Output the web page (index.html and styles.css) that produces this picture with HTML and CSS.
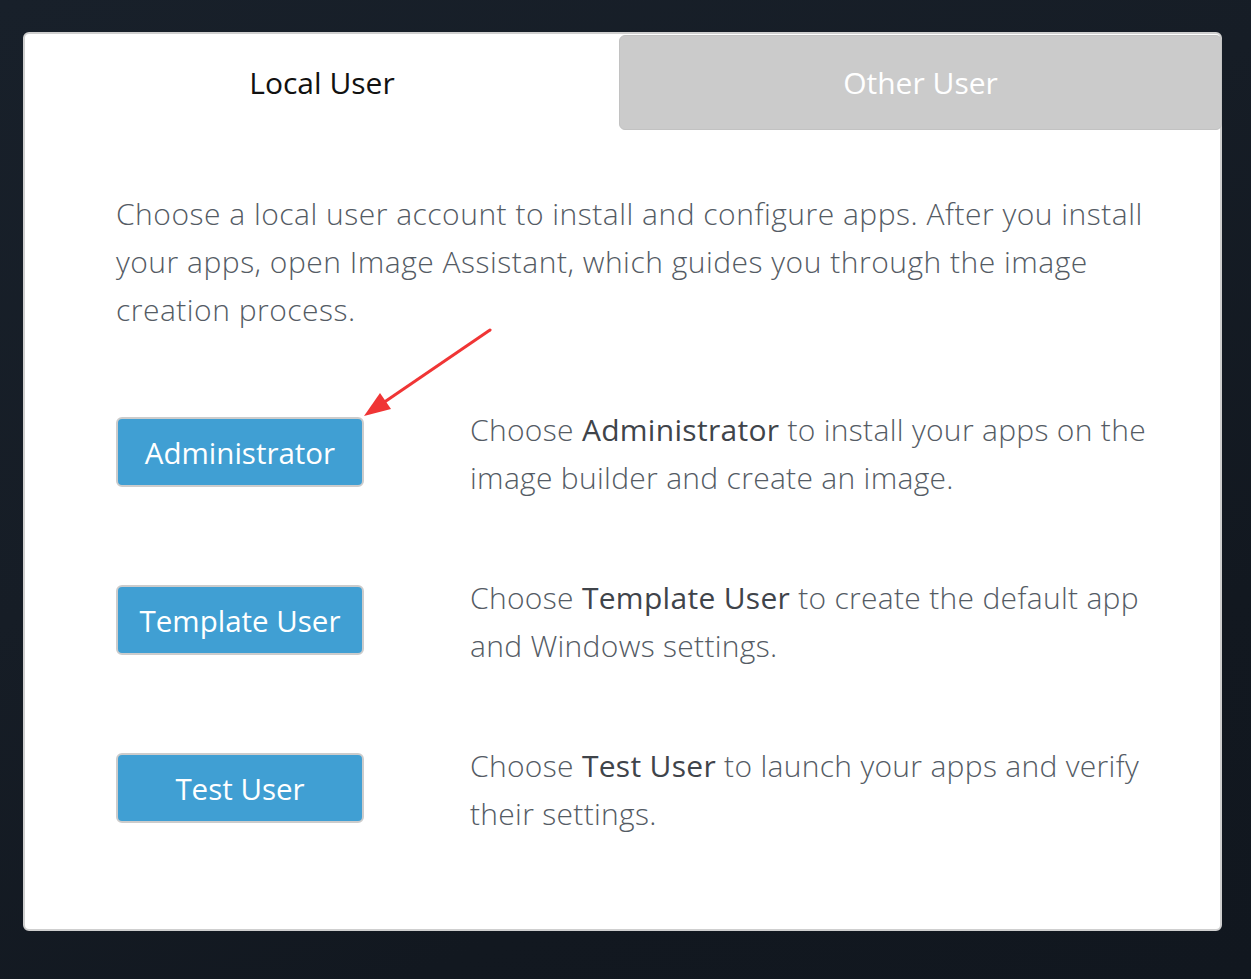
FILE: index.html
```html
<!DOCTYPE html>
<html lang="en">
<head>
<meta charset="utf-8">
<title>Local User</title>
<link rel="stylesheet" href="styles.css">
</head>
<body>
<div class="card">
  <div class="tabs">
    <div class="tab tab-active">Local User</div>
    <div class="tab tab-inactive">Other User</div>
  </div>
  <p class="intro">Choose a local user account to install and configure apps. After you install your apps, open Image Assistant, which guides you through the image creation process.</p>
  <div class="rows">
    <div class="row">
      <button class="user-btn">Administrator</button>
      <p class="desc"><span class="line">Choose <b>Administrator</b> to install your apps on the</span><span class="line">image builder and create an image.</span></p>
    </div>
    <div class="row">
      <button class="user-btn">Template User</button>
      <p class="desc"><span class="line">Choose <b>Template User</b> to create the default app</span><span class="line">and Windows settings.</span></p>
    </div>
    <div class="row">
      <button class="user-btn">Test User</button>
      <p class="desc"><span class="line">Choose <b>Test User</b> to launch your apps and verify</span><span class="line">their settings.</span></p>
    </div>
  </div>
  <svg class="arrow" width="140" height="97" viewBox="0 0 140 97">
    <line x1="135" y1="5" x2="28" y2="78" stroke="#f03535" stroke-width="3" stroke-linecap="round"/>
    <polygon points="9,91 36,84 25,68" fill="#f03535"/>
  </svg>
</div>
</body>
</html>
```
FILE: styles.css
```css
html, body {
  margin: 0;
  padding: 0;
}
body {
  width: 1251px;
  height: 979px;
  overflow: hidden;
  background: linear-gradient(155deg, #18202a 0%, #161d26 40%, #121820 75%, #11171f 100%);
  font-family: "Open Sans", "Liberation Sans", sans-serif;
}
.card {
  position: relative;
  box-sizing: border-box;
  margin: 32px 0 0 23px;
  width: 1199px;
  height: 899px;
  background: #ffffff;
  border: 2px solid #cfcfcf;
  border-radius: 6px;
}
.tabs {
  display: flex;
  height: 96px;
}
.tab {
  display: flex;
  align-items: center;
  justify-content: center;
  font-size: 30px;
  box-sizing: border-box;
}
.tab-active {
  width: 594px;
  color: #111111;
  font-weight: 400;
}
.tab-inactive {
  flex: 1;
  margin-top: 1px;
  margin-right: -2px;
  background: #cbcbcb;
  color: #ffffff;
  border: 1px solid #c2c2c2;
  border-radius: 6px;
}
.intro {
  margin: 60px 60px 0 91px;
  font-size: 30px;
  line-height: 48px;
  font-weight: 300;
  letter-spacing: 0.5px;
  color: #545b64;
}
.rows {
  display: flex;
  flex-direction: column;
  gap: 72px;
  margin: 72px 0 0 91px;
}
.row {
  display: flex;
  align-items: flex-start;
  gap: 106px;
}
.user-btn {
  flex: none;
  margin-top: 11px;
  width: 248px;
  height: 70px;
  box-sizing: border-box;
  background: #409fd3;
  border: 2px solid #cccccc;
  border-radius: 6px;
  color: #ffffff;
  font-family: inherit;
  font-size: 29.5px;
  font-weight: 400;
  padding: 0;
}
.desc {
  margin: 0;
  font-size: 30px;
  line-height: 48px;
  font-weight: 300;
  letter-spacing: 0.3px;
  color: #545b64;
}
.line {
  display: block;
  white-space: nowrap;
}
.desc b {
  font-weight: 400;
  color: #3f444a;
}
.arrow {
  position: absolute;
  left: 330px;
  top: 291px;
}
```
